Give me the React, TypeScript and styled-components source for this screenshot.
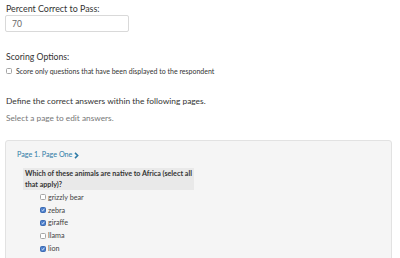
import React from 'react';
import styled, { createGlobalStyle } from 'styled-components';

const GlobalStyle = createGlobalStyle`
  body {
    margin: 0;
    background: #fff;
    font-family: Lato, "Open Sans", sans-serif;
    color: #333;
  }
`;

const options = [
  { label: 'grizzly bear', checked: false },
  { label: 'zebra', checked: true },
  { label: 'giraffe', checked: true },
  { label: 'llama', checked: false },
  { label: 'lion', checked: true },
];

const App: React.FC = () => {
  return (
    <>
      <GlobalStyle />
      <Page>
        <Label>Percent Correct to Pass:</Label>
        <Input defaultValue="70" />

        <SectionLabel>Scoring Options:</SectionLabel>
        <CheckRow>
          <Box />
          <SmallText>Score only questions that have been displayed to the respondent</SmallText>
        </CheckRow>

        <Heading>Define the correct answers within the following pages.</Heading>
        <Hint>Select a page to edit answers.</Hint>

        <Panel>
          <PageLink>
            Page 1. Page One
            <Chevron viewBox="0 0 6 8">
              <path d="M1.2 0.8 L4.4 4 L1.2 7.2" fill="none" stroke="currentColor" strokeWidth="1.9" />
            </Chevron>
          </PageLink>
          <Question>Which of these animals are native to Africa (select all that apply)?</Question>
          <OptionList>
            {options.map((o) => (
              <Option key={o.label}>
                <Box $checked={o.checked}>
                  {o.checked && (
                    <svg viewBox="0 0 8 8" width="6" height="6">
                      <path d="M1.3 4.2 L3.2 6 L6.8 1.6" fill="none" stroke="#fff" strokeWidth="1.6" />
                    </svg>
                  )}
                </Box>
                <span>{o.label}</span>
              </Option>
            ))}
          </OptionList>
        </Panel>
      </Page>
    </>
  );
};

const Page = styled.div`
  padding: 0 8px 0 5px;
  display: flex;
  flex-direction: column;
`;

const Label = styled.div`
  font-size: 8.9px;
  line-height: 12px;
  margin-top: 3px;
  margin-left: 1px;
`;

const Input = styled.input`
  width: 124px;
  height: 17px;
  box-sizing: border-box;
  border: 1px solid #d9d9d9;
  border-radius: 2px;
  padding: 0 6px;
  font-family: Lato, sans-serif;
  font-size: 8.5px;
  color: #666;
  outline: none;
`;

const SectionLabel = styled.div`
  font-size: 8.7px;
  line-height: 11px;
  margin-top: 19px;
  margin-left: 1px;
`;

const CheckRow = styled.div`
  display: flex;
  align-items: center;
  gap: 4px;
  margin-top: 4px;
  margin-left: 1px;
  height: 10px;
`;

const Box = styled.span<{ $checked?: boolean }>`
  width: 6px;
  height: 6px;
  box-sizing: border-box;
  border: 1px solid ${({ $checked }) => ($checked ? '#3d6bb3' : '#a5a5a5')};
  background: ${({ $checked }) => ($checked ? '#4c7fcc' : '#fff')};
  border-radius: 1.5px;
  display: inline-flex;
  align-items: center;
  justify-content: center;
  flex-shrink: 0;
`;

const SmallText = styled.span`
  font-size: 7px;
  line-height: 10px;
`;

const Heading = styled.div`
  font-size: 8.4px;
  line-height: 11px;
  margin-top: 20px;
  margin-left: 1px;
`;

const Hint = styled.div`
  font-size: 8.3px;
  line-height: 11px;
  color: #777;
  margin-top: 6px;
  margin-left: 1px;
`;

const Panel = styled.div`
  margin-top: 16px;
  background: #f5f5f5;
  border: 1px solid #e2e2e2;
  border-radius: 3px;
  padding: 9px 12px 20px 11px;
  min-height: 140px;
`;

const PageLink = styled.div`
  font-size: 7.2px;
  line-height: 10px;
  color: #2f7ba6;
  display: flex;
  align-items: center;
  gap: 2px;
`;

const Chevron = styled.svg`
  width: 5px;
  height: 7px;
`;

const Question = styled.div`
  margin-top: 8px;
  margin-left: 6px;
  width: 171px;
  box-sizing: border-box;
  background: #e9e9e9;
  font-size: 7.15px;
  line-height: 11px;
  font-weight: bold;
  color: #333;
  padding: 0 2px;
`;

const OptionList = styled.div`
  margin-left: 23px;
  margin-top: 1px;
  display: flex;
  flex-direction: column;
`;

const Option = styled.div`
  display: flex;
  align-items: center;
  gap: 2px;
  height: 12.8px;
  font-size: 7.2px;
  color: #444;
`;

export default App;
